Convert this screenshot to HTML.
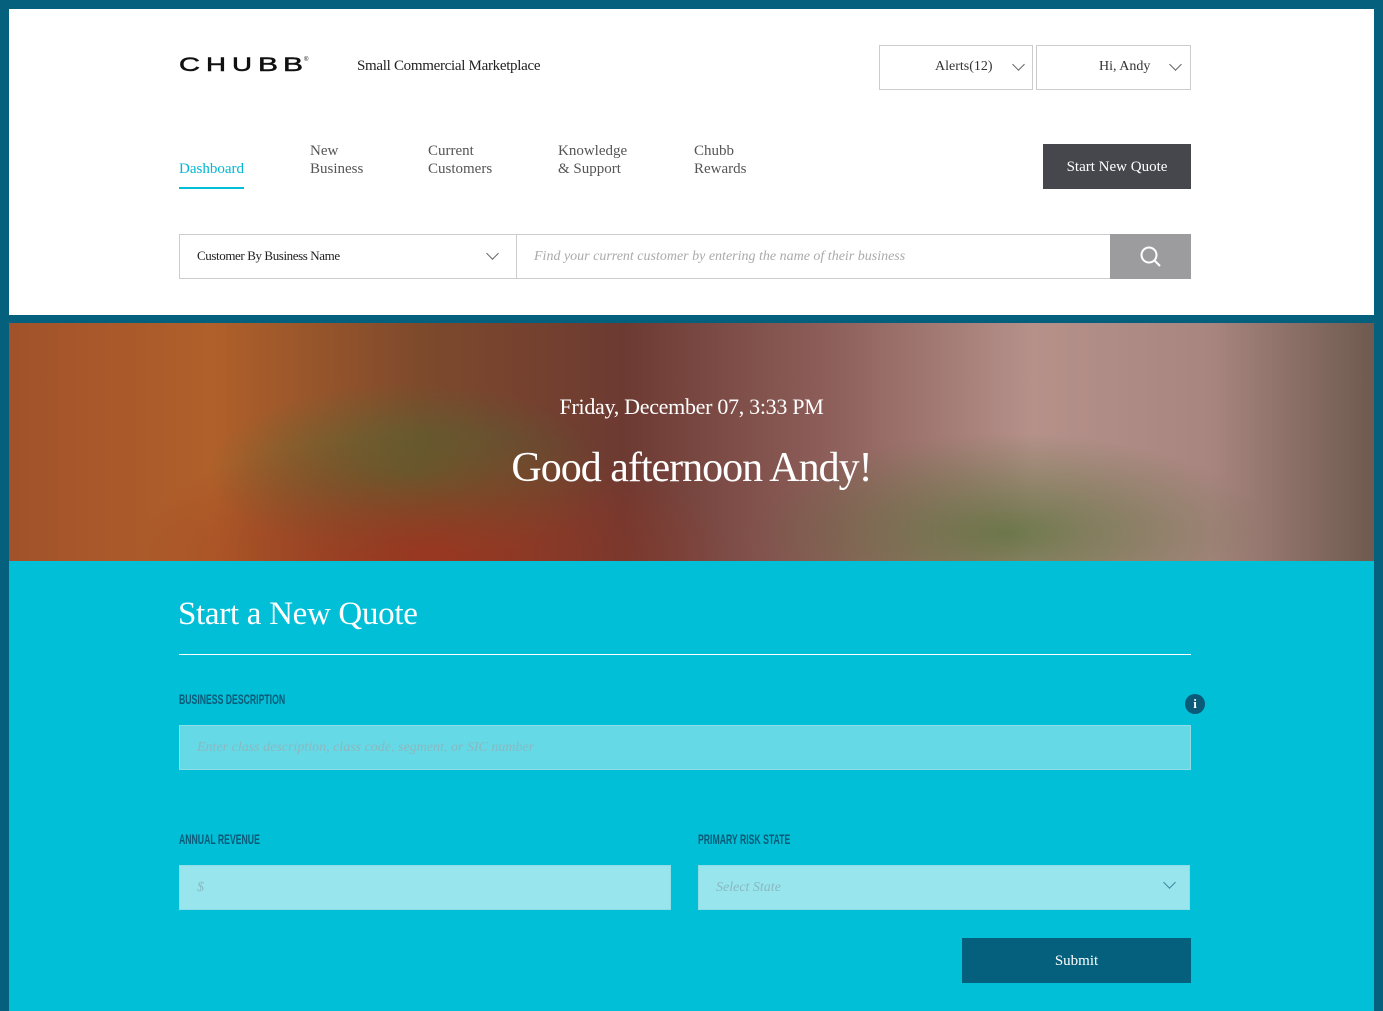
<!DOCTYPE html>
<html><head><meta charset="utf-8"><style>
*{margin:0;padding:0;box-sizing:border-box}
body{width:1383px;height:1011px;background:#05607e;position:relative;overflow:hidden;font-family:"Liberation Serif",serif}
.hdr{position:absolute;left:9px;top:9px;width:1365px;height:306px;background:#fff}
.a{position:absolute}
.nav{font-size:15px;color:#555;line-height:18px}
.dd{border:1px solid #ccc;height:45px;font-size:14px;color:#333}
.chev{position:absolute;width:9px;height:9px;border-right:1.5px solid #666;border-bottom:1.5px solid #666;transform:rotate(45deg)}
.hero{position:absolute;left:9px;top:323px;width:1365px;height:238px;overflow:hidden;
background:
radial-gradient(ellipse 300px 120px at 420px 230px,rgba(160,50,30,.8),transparent),
radial-gradient(ellipse 260px 100px at 1000px 210px,rgba(80,110,50,.7),transparent),
radial-gradient(ellipse 200px 90px at 400px 150px,rgba(70,110,50,.7),transparent),
linear-gradient(90deg,#a2522a 0%,#b0602a 15%,#7e4a2c 30%,#6d3a32 45%,#8d5e5a 60%,#b5918a 75%,#a98580 88%,#6e5a4e 100%)}
.blue{position:absolute;left:9px;top:561px;width:1365px;height:450px;background:#00bfd6}
.lbl{font-family:"Liberation Sans",sans-serif;font-weight:bold;font-size:14px;color:#0a5a78;transform:scaleX(.62);transform-origin:left;white-space:nowrap}
.inp{height:45px;border:1px solid #8fdce6;font-style:italic;font-size:14px;color:#8ab8c0;padding:12px 17px}
</style></head><body>
<div class="hdr"></div>
<svg class="a" style="left:178px;top:54px" width="135" height="20"><g font-family="Liberation Sans,sans-serif" font-size="19" fill="#111" stroke="#111" stroke-width="0.5"><text x="1" y="17" textLength="21" lengthAdjust="spacingAndGlyphs">C</text><text x="28" y="17" textLength="20" lengthAdjust="spacingAndGlyphs">H</text><text x="54" y="17" textLength="20" lengthAdjust="spacingAndGlyphs">U</text><text x="80" y="17" textLength="20" lengthAdjust="spacingAndGlyphs">B</text><text x="105" y="17" textLength="20" lengthAdjust="spacingAndGlyphs">B</text></g><text x="126" y="7" font-size="6" font-family="Liberation Sans,sans-serif" fill="#111">®</text></svg>
<div class="a" style="left:357px;top:58px;font-size:15px;color:#222;letter-spacing:-.3px">Small Commercial Marketplace</div>
<div class="a dd" style="left:879px;top:45px;width:154px"><span class="a" style="left:55px;top:13px">Alerts(12)</span><span class="chev" style="left:134px;top:14px"></span></div>
<div class="a dd" style="left:1036px;top:45px;width:155px"><span class="a" style="left:62px;top:13px">Hi, Andy</span><span class="chev" style="left:134px;top:14px"></span></div>
<div class="a nav" style="left:179px;top:160px;color:#00b7d4">Dashboard</div>
<div class="a" style="left:179px;top:187px;width:65px;height:2px;background:#00bfd6"></div>
<div class="a nav" style="left:310px;top:142px">New<br>Business</div>
<div class="a nav" style="left:428px;top:142px">Current<br>Customers</div>
<div class="a nav" style="left:558px;top:142px">Knowledge<br>&amp; Support</div>
<div class="a nav" style="left:694px;top:142px">Chubb<br>Rewards</div>
<div class="a" style="left:1043px;top:144px;width:148px;height:45px;background:#45474c;color:#fff;font-size:15px;text-align:center;line-height:47px">Start New Quote</div>
<div class="a" style="left:179px;top:234px;width:1012px;height:45px;border:1px solid #ccc"></div>
<div class="a" style="left:516px;top:234px;width:1px;height:45px;background:#ccc"></div>
<div class="a" style="left:197px;top:248px;font-size:13px;color:#222;letter-spacing:-.4px">Customer By Business Name</div>
<span class="chev" style="left:488px;top:249px"></span>
<div class="a" style="left:534px;top:249px;font-size:14px;font-style:italic;color:#aaa">Find your current customer by entering the name of their business</div>
<div class="a" style="left:1110px;top:234px;width:81px;height:45px;background:#9c9c9f"><svg width="81" height="45"><circle cx="39" cy="21" r="7.5" fill="none" stroke="#fff" stroke-width="2"/><line x1="44.5" y1="26.5" x2="50" y2="32" stroke="#fff" stroke-width="2"/></svg></div>
<div class="hero"></div>
<div class="a" style="left:0;width:1383px;top:394px;text-align:center;color:#fff;font-size:22px;letter-spacing:-.3px">Friday, December 07, 3:33 PM</div>
<div class="a" style="left:0;width:1383px;top:444px;text-align:center;color:#fff;font-size:42px;letter-spacing:-1px">Good afternoon Andy!</div>
<div class="blue"></div>
<div class="a" style="left:178px;top:596px;color:#fff;font-size:33px;letter-spacing:-.3px">Start a New Quote</div>
<div class="a" style="left:179px;top:654px;width:1012px;height:1px;background:#fff"></div>
<div class="a lbl" style="left:179px;top:691px">BUSINESS DESCRIPTION</div>
<div class="a" style="left:1185px;top:694px;width:20px;height:20px;border-radius:50%;background:#0a5a78;color:#fff;font-size:13px;font-weight:bold;text-align:center;line-height:20px">i</div>
<div class="a inp" style="left:179px;top:725px;width:1012px;background:#66d9e6;padding-top:14px">Enter class description, class code, segment, or SIC number</div>
<div class="a lbl" style="left:179px;top:831px">ANNUAL REVENUE</div>
<div class="a lbl" style="left:698px;top:831px">PRIMARY RISK STATE</div>
<div class="a inp" style="left:179px;top:865px;width:492px;background:#98e5ee;padding-top:14px">$</div>
<div class="a inp" style="left:698px;top:865px;width:492px;background:#98e5ee;padding-top:14px">Select State</div>
<span class="chev" style="left:1165px;top:878px;border-color:#3a8a9a"></span>
<div class="a" style="left:962px;top:938px;width:229px;height:45px;background:#05607e;color:#fff;font-size:15px;text-align:center;line-height:47px">Submit</div>
</body></html>
